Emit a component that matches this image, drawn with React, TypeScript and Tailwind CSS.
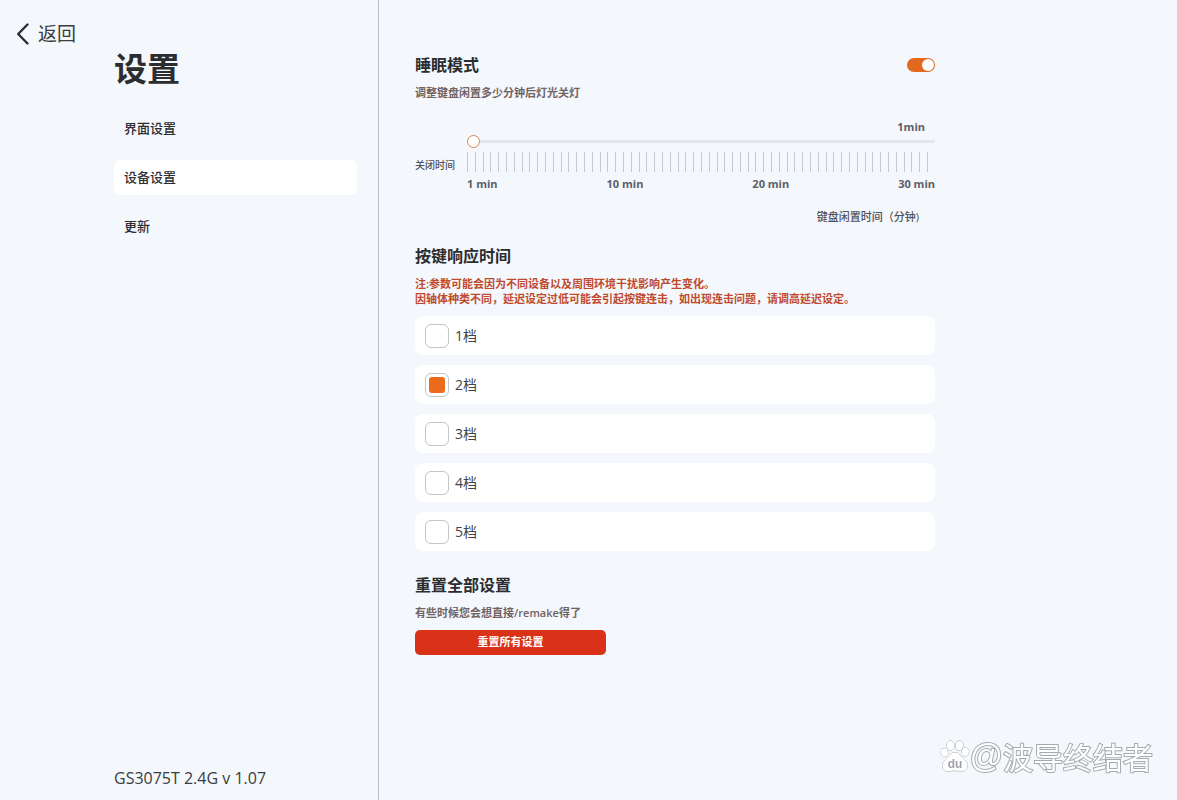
import React, { useState } from "react";

const navItems = ["界面设置", "设备设置", "更新"];
const levels = ["1档", "2档", "3档", "4档", "5档"];
const scaleLabels = ["1 min", "10 min", "20 min", "30 min"];
const ticks = Array.from({ length: 60 }, (_, i) => i);

function BackIcon() {
  return (
    <svg width="14" height="22" viewBox="0 0 14 22" fill="none" aria-hidden="true">
      <path d="M11.500 1.500 2.200 11 11.500 20.500" stroke="#2b2d31" strokeWidth="2.4" strokeLinecap="round" strokeLinejoin="round" />
    </svg>
  );
}

function PawIcon() {
  return (
    <svg width="30" height="34" viewBox="0 0 30 34" aria-hidden="true">
      <g fill="#fff" stroke="#a6aaae" strokeWidth="1">
        <ellipse cx="4.5" cy="13.5" rx="3.5" ry="4.2" transform="rotate(-12 4.5 13.5)" />
        <ellipse cx="10.5" cy="6.5" rx="3.8" ry="4.8" />
        <ellipse cx="19.300" cy="6.5" rx="3.8" ry="4.8" transform="rotate(8 19.3 6.5)" />
        <ellipse cx="25.3" cy="13" rx="3.5" ry="4.2" transform="rotate(12 25.3 13)" />
        <path d="M15 13.5c-4 0-5.200 3.400-7.600 5.800C4.800 21.800 2.500 23.500 2.500 26.800c0 3.200 2.400 5.400 5.700 5.400 2.400 0 4.300-.6 6.800-.6s4.400.6 6.800.6c3.300 0 5.700-2.200 5.700-5.400 0-3.300-2.300-5-4.900-7.500-2.400-2.400-3.600-5.800-7.600-5.800Z" />
      </g>
      <text x="15" y="29" textAnchor="middle" fill="#a0a4a8" className="font-['Liberation_Sans',sans-serif] text-[12px] font-bold">
        du
      </text>
    </svg>
  );
}

interface SwitchProps {
  checked: boolean;
  onChange: (value: boolean) => void;
}

function Switch({ checked, onChange }: SwitchProps) {
  return (
    <button
      type="button"
      role="switch"
      aria-checked={checked}
      aria-label="睡眠模式"
      onClick={() => onChange(!checked)}
      className={`flex h-[14px] w-7 items-center rounded-full px-px ${checked ? "justify-end bg-[#e2691e]" : "justify-start bg-gray-300"}`}
    >
      <span className="h-3 w-3 rounded-full bg-white" />
    </button>
  );
}

export default function App() {
  const [page, setPage] = useState("设备设置");
  const [sleep, setSleep] = useState(true);
  const [minutes, setMinutes] = useState(1);
  const [level, setLevel] = useState("2档");

  return (
    <div className="flex min-h-screen bg-[#f4f7fb] font-['Open_Sans','Noto_Sans_CJK_SC',sans-serif] text-[#2b2d31]">
      <aside className="flex w-[379px] shrink-0 flex-col border-r border-[#bfc2c6]">
        <button type="button" className="mt-5 ml-4 flex h-7 items-center gap-2 self-start text-[19px] leading-7 text-[#3a3c41]">
          <BackIcon />
          返回
        </button>
        <div className="flex grow flex-col pr-[21px] pl-[114px]">
          <h1 className="text-[33px] leading-[42px] font-bold">设置</h1>
          <nav className="mt-[21px] flex flex-col gap-[14px]">
            {navItems.map((item) => (
              <button
                key={item}
                type="button"
                onClick={() => setPage(item)}
                className={`h-[35px] rounded-md px-[10px] text-left text-[13px] font-medium ${page === item ? "bg-white" : ""}`}
              >
                {item}
              </button>
            ))}
          </nav>
          <p className="mt-auto pb-[10px] text-[16px] leading-6 text-[#3a3c41]">GS3075T 2.4G v 1.07</p>
        </div>
      </aside>

      <main className="min-w-0 grow px-9 pt-[53px] pb-10">
        <div className="max-w-[520px]">
          <section>
            <div className="flex items-center justify-between">
              <h2 className="text-[16px] leading-6 font-bold">睡眠模式</h2>
              <Switch checked={sleep} onChange={setSleep} />
            </div>
            <p className="mt-2 text-[11px] leading-4 font-semibold text-[#706364]">调整键盘闲置多少分钟后灯光关灯</p>

            <div className="mt-[18px] flex">
              <label htmlFor="idle" className="w-[52px] shrink-0 pt-[38px] text-[10px] leading-4 font-medium text-[#4d525c]">
                关闭时间
              </label>
              <div className="min-w-0 grow text-[11px] leading-4 font-bold text-[#5b6069]">
                <output htmlFor="idle" className="block pr-[10px] text-right">
                  {minutes}min
                </output>
                <input
                  id="idle"
                  type="range"
                  min={1}
                  max={30}
                  value={minutes}
                  onChange={(e) => setMinutes(Number(e.target.value))}
                  className="block h-3 w-full appearance-none bg-transparent [&::-webkit-slider-runnable-track]:h-[3px] [&::-webkit-slider-runnable-track]:rounded-full [&::-webkit-slider-runnable-track]:bg-[#e3e6ea] [&::-webkit-slider-thumb]:-mt-[5px] [&::-webkit-slider-thumb]:h-[13px] [&::-webkit-slider-thumb]:w-[13px] [&::-webkit-slider-thumb]:appearance-none [&::-webkit-slider-thumb]:rounded-full [&::-webkit-slider-thumb]:border [&::-webkit-slider-thumb]:border-solid [&::-webkit-slider-thumb]:border-[#d9854f] [&::-webkit-slider-thumb]:bg-white"
                />
                <div className="mt-[5px] flex h-5">
                  {ticks.map((t) => (
                    <span key={t} className="flex-1 border-l border-[#c6c9cd]" />
                  ))}
                </div>
                <div className="mt-1 flex justify-between">
                  {scaleLabels.map((label) => (
                    <span key={label}>{label}</span>
                  ))}
                </div>
              </div>
            </div>
            <p className="mt-[17px] pr-4 text-right text-[11px] leading-4 font-medium text-[#4d525c]">键盘闲置时间（分钟)</p>
          </section>

          <section className="mt-[19px]">
            <h2 className="text-[16px] leading-6 font-bold">按键响应时间</h2>
            <p className="mt-2 text-[11px] leading-[15px] font-semibold text-[#c04a2e]">
              注:参数可能会因为不同设备以及周围环境干扰影响产生变化。
              <br />
              因轴体种类不同，延迟设定过低可能会引起按键连击，如出现连击问题，请调高延迟设定。
            </p>
            <div className="mt-[10px] flex flex-col gap-[10px]">
              {levels.map((item) => (
                <label key={item} className="flex h-[39px] items-center gap-[6px] rounded-lg bg-white px-[10px] text-[14px] text-[#3f4247]">
                  <input
                    type="radio"
                    name="level"
                    checked={level === item}
                    onChange={() => setLevel(item)}
                    className="flex h-6 w-6 appearance-none items-center justify-center rounded-md border border-[#c3c5c8] bg-white before:h-4 before:w-4 before:rounded-[3px] checked:before:bg-[#ec6a1c] checked:before:content-['']"
                  />
                  {item}
                </label>
              ))}
            </div>
          </section>

          <section className="mt-[22px]">
            <h2 className="text-[16px] leading-6 font-bold">重置全部设置</h2>
            <p className="mt-2 text-[11px] leading-4 font-semibold text-[#706364]">有些时候您会想直接/remake得了</p>
            <button type="button" className="mt-[9px] h-[25px] w-[191px] rounded-[5px] bg-[#d93218] text-[11px] font-bold text-white">
              重置所有设置
            </button>
          </section>
        </div>
      </main>

      <div className="pointer-events-none fixed right-6 bottom-[23px] flex items-center text-white [-webkit-text-stroke:2px_#a6aaae] [paint-order:stroke]">
        <div className="[-webkit-text-stroke:0]">
          <PawIcon />
        </div>
        <span className="font-['Liberation_Sans',sans-serif] text-[33px] leading-[36px]">@</span>
        <span className="font-['Noto_Sans_CJK_SC',sans-serif] text-[30px] leading-[42px]">波导终结者</span>
      </div>
    </div>
  );
}
